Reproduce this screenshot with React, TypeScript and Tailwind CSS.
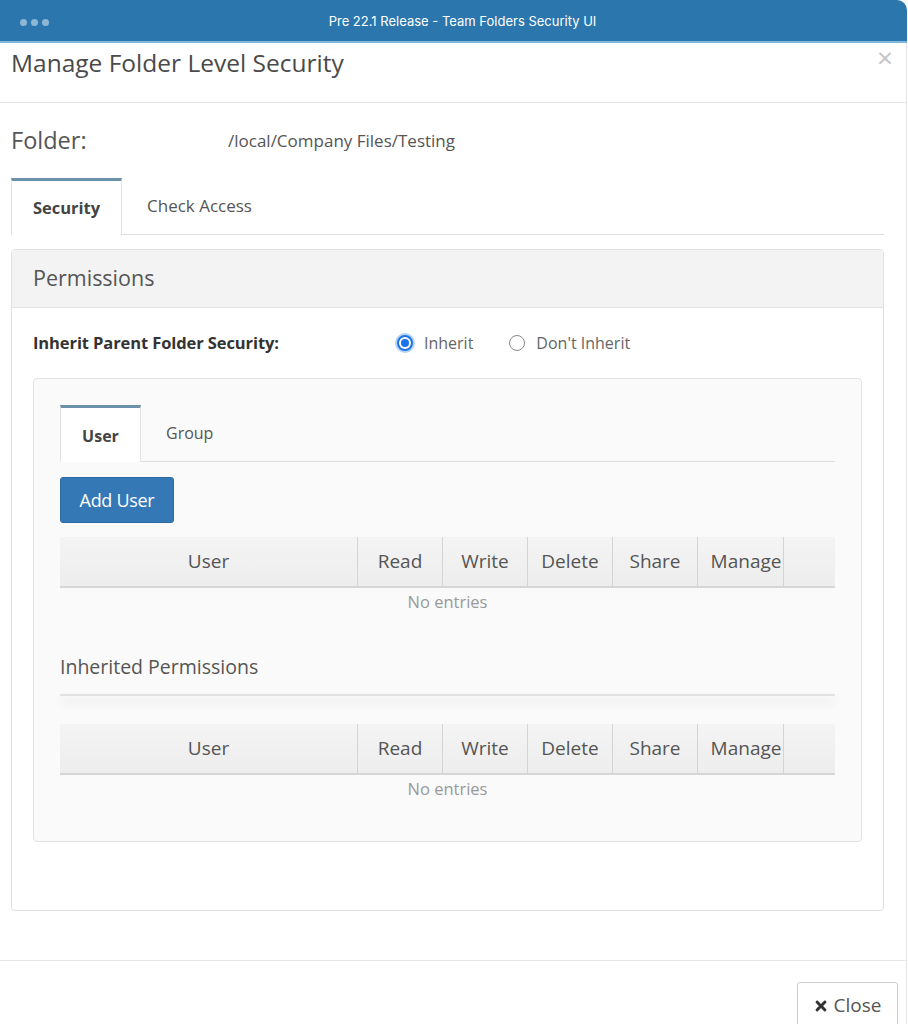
import { FaTimes } from "react-icons/fa";

const cols = ["Read", "Write", "Delete", "Share"];

function PermTable() {
  return (
    <div>
      <div className="grid grid-cols-[298px_85px_85px_85px_85px_86px_50px] h-[51px] bg-gradient-to-b from-[#f4f4f4] to-[#ededed] border-b-2 border-[#d6d6d6] text-[19px] text-[#555]">
        <div className="flex items-center justify-center border-r border-[#d4d4d4]">User</div>
        {cols.map((c) => (
          <div key={c} className="flex items-center justify-center border-r border-[#d4d4d4]">
            {c}
          </div>
        ))}
        <div className="flex items-center justify-center border-r border-[#d4d4d4] pl-[11px]">Manage</div>
        <div />
      </div>
      <div className="text-center text-[16.5px] text-[#999] leading-[28px]">No entries</div>
    </div>
  );
}

function Radio({ checked, label }: { checked: boolean; label: string }) {
  return (
    <label className="flex items-center gap-[11px] text-[16px] text-[#666]">
      {checked ? (
        <span className="w-[16px] h-[16px] rounded-full bg-[#1a73e8] border-[3.5px] border-[#1a73e8] shadow-[0_0_0_2px_#b9d4f5] flex items-center justify-center">
          <span className="w-[8px] h-[8px] rounded-full bg-[#1a73e8] ring-[2px] ring-white" />
        </span>
      ) : (
        <span className="w-[16px] h-[16px] rounded-full border border-[#888] bg-white" />
      )}
      {label}
    </label>
  );
}

export default function App() {
  return (
    <div
      className="w-[908px] h-[1024px] bg-white overflow-hidden text-[#555]"
      style={{ fontFamily: '"Open Sans", "Noto Sans", sans-serif' }}
    >
      {/* window title bar */}
      <div
        className="h-[43px] bg-[#2b76ad] rounded-tr-[10px] border-b-2 border-[#7fb6dd] flex items-center relative w-[907px] pt-[3px]"
        style={{ fontFamily: 'Inter, "Liberation Sans", sans-serif' }}
      >
        <div className="flex gap-[4px] pl-[20px]">
          <span className="w-[7px] h-[7px] rounded-full bg-[#8eb7d6]" />
          <span className="w-[7px] h-[7px] rounded-full bg-[#8eb7d6]" />
          <span className="w-[7px] h-[7px] rounded-full bg-[#8eb7d6]" />
        </div>
        <div className="absolute inset-0 flex items-center justify-center text-white text-[13px] pl-[18px] pt-[3px]">
          Pre 22.1 Release - Team Folders Security UI
        </div>
      </div>

      <div className="w-[907px] border-r border-[#e4e4e4] h-[981px]">
        {/* modal header */}
        <div className="h-[60px] border-b border-[#e5e5e5] flex items-start justify-between pl-[11px] pr-[13px]">
          <h1 className="text-[24.5px] text-[#4a4a4a] leading-[40px]">Manage Folder Level Security</h1>
          <span className="text-[#c4c4c4] text-[28px] leading-[32px] -mt-[2px]">×</span>
        </div>

        <div className="px-[11px] pr-[22px]">
          <div className="flex items-center h-[75px]">
            <span className="text-[23.5px] text-[#555] w-[217px]">Folder:</span>
            <span className="text-[17px] text-[#555]">/local/Company Files/Testing</span>
          </div>

          {/* main tabs */}
          <div className="flex border-b border-[#ddd] h-[57px]">
            <div className="w-[111px] border-t-[3px] border-[#6b92a8] border-x border-x-[#e2e2e2] bg-white -mb-px flex items-center justify-center font-bold text-[16.5px] text-[#444] pt-[1px]">
              Security
            </div>
            <div className="px-[25px] flex items-center text-[17px] text-[#555]">Check Access</div>
          </div>

          {/* permissions panel */}
          <div className="mt-[14px] border border-[#e1e1e1] rounded-[4px] h-[662px]">
            <div className="h-[58px] bg-[#f3f3f3] border-b border-[#e3e3e3] flex items-center px-[21px] text-[21.5px] text-[#555]">
              Permissions
            </div>
            <div className="px-[21px]">
              <div className="flex items-center h-[70px]">
                <span className="w-[364px] font-bold text-[16.5px] text-[#333] tracking-[-0.1px]">Inherit Parent Folder Security:</span>
                <div className="flex gap-[36px]">
                  <Radio checked label="Inherit" />
                  <Radio checked={false} label="Don't Inherit" />
                </div>
              </div>

              {/* well */}
              <div className="bg-[#fafafa] border border-[#e3e3e3] rounded-[4px] h-[464px] px-[26px] pt-[26px]">
                <div className="flex border-b border-[#ddd] h-[57px]">
                  <div className="w-[81px] border-t-[3px] border-[#6b92a8] border-x border-x-[#e2e2e2] bg-white -mb-px flex items-center justify-center font-bold text-[16px] text-[#444] pt-[2px]">
                    User
                  </div>
                  <div className="px-[25px] flex items-center text-[16px] text-[#555]">Group</div>
                </div>

                <button className="mt-[15px] h-[46px] w-[114px] bg-[#3479b6] border border-[#2d6aa0] rounded-[3px] text-white text-[18px] tracking-[-0.3px]">
                  Add User
                </button>

                <div className="mt-[14px]">
                  <PermTable />
                </div>

                <div className="mt-[37px] text-[19.5px] text-[#555] leading-[28px]">Inherited Permissions</div>
                <div className="mt-[13px] h-[2px] bg-[#e2e2e2] shadow-[0_6px_10px_rgba(0,0,0,0.14)]" />

                <div className="mt-[28px]">
                  <PermTable />
                </div>
              </div>
            </div>
          </div>
        </div>

        {/* footer */}
        <div className="mt-[49px] border-t border-[#e5e5e5] h-[64px] flex justify-end items-start pr-[8px] pt-[21px]">
          <button className="w-[101px] h-[60px] border border-[#ccc] rounded-[3px] bg-white flex items-start justify-center gap-[6px] pt-[8px] text-[19px] text-[#555]">
            <FaTimes className="w-[14px] h-[16px] text-[#333] mt-[7px]" />
            Close
          </button>
        </div>
      </div>
    </div>
  );
}
